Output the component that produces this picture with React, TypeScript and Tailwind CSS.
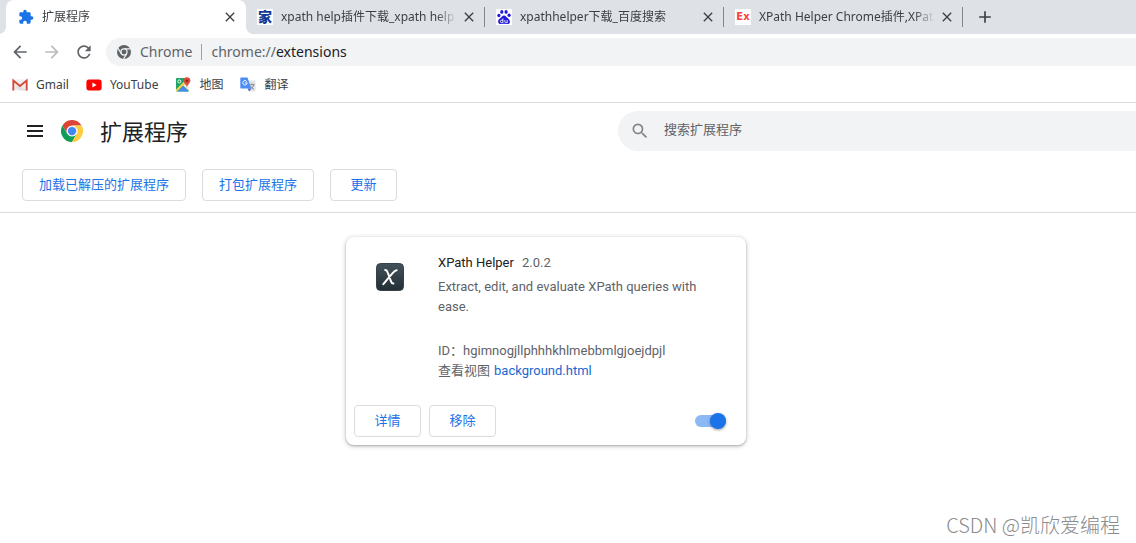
import type { ReactNode } from "react";
import {
  MdAdd,
  MdArrowBack,
  MdArrowForward,
  MdClose,
  MdExtension,
  MdRefresh,
  MdSearch,
} from "react-icons/md";

const ChromeLogo = () => (
  <svg viewBox="0 0 48 48" className="h-6 w-6 shrink-0 p-px" aria-hidden="true">
    <path fill="#db4437" d="M3.2 12A24 24 0 0 1 44.8 12H24A12 12 0 0 0 13.6 30Z" />
    <path fill="#0f9d58" d="M3.2 12 13.6 30A12 12 0 0 0 34.4 30L24 48A24 24 0 0 1 3.2 12Z" />
    <path fill="#ffcd40" d="M44.8 12A24 24 0 0 1 24 48L34.4 30A12 12 0 0 0 24 12Z" />
    <circle cx="24" cy="24" r="11" fill="#f1f1f1" />
    <circle cx="24" cy="24" r="9" fill="#4285f4" />
  </svg>
);

const ChromeMark = () => (
  <svg viewBox="0 0 48 48" className="h-4 w-4 shrink-0 p-px" aria-hidden="true">
    <circle cx="24" cy="24" r="24" fill="#5f6368" />
    <path d="M24 13H46M14.5 29.5 3.5 11M33.5 29.5 22.5 48" stroke="#f1f3f4" strokeWidth="4" />
    <circle cx="24" cy="24" r="12.5" fill="#f1f3f4" />
    <circle cx="24" cy="24" r="8.5" fill="#5f6368" />
  </svg>
);

const MenuIcon = () => (
  <svg viewBox="0 0 24 24" className="h-6 w-6" aria-hidden="true">
    <path fill="currentColor" d="M4 6h16v2H4zM4 11h16v2H4zM4 16h16v2H4z" />
  </svg>
);

const BaiduIcon = () => (
  <svg viewBox="0 0 16 16" className="h-4 w-4 shrink-0" aria-hidden="true">
    <rect width="16" height="16" rx="1" fill="#fff" />
    <g fill="#2319dc">
      <ellipse cx="2.9" cy="6.5" rx="1.6" ry="1.8" />
      <ellipse cx="5.8" cy="2.9" rx="1.6" ry="1.9" />
      <ellipse cx="10.1" cy="2.9" rx="1.6" ry="1.9" />
      <ellipse cx="13.1" cy="6.3" rx="1.6" ry="1.8" />
      <path d="M8 6.4c1.8 0 2.300 1.600 3.500 2.700 1.300 1.100 2.400 2 2.400 3.600 0 1.800-1.300 2.500-2.800 2.400-1.100 0-1.900-.3-3.100-.3s-2 .3-3.100.3c-1.500 0-2.800-.7-2.800-2.400 0-1.600 1.100-2.500 2.400-3.600C5.700 8 6.200 6.400 8 6.400Z" />
    </g>
    <path
      d="M6.900 9.500v4.200H5.500c-1.500 0-1.500-2.500 0-2.500h1.400M8.900 11v1.900c0 .6.300.8.800.8h1.500V11"
      fill="none"
      stroke="#fff"
      strokeWidth="0.9"
    />
  </svg>
);

const GmailIcon = () => (
  <svg viewBox="0 0 16 16" className="h-4 w-4" aria-hidden="true">
    <path fill="#eee" d="M1 2.5h14v11H1z" />
    <path fill="#d8d8d8" d="m8 9 7 4.5H8L4 10z" opacity=".6" />
    <path d="M1.300 13.500V3.600L8 9l6.700-5.400v9.900" fill="none" stroke="#d54b3d" strokeWidth="1.900" />
  </svg>
);

const YouTubeIcon = () => (
  <svg viewBox="0 0 16 16" className="h-4 w-4" aria-hidden="true">
    <rect x="0.4" y="2.6" width="15.200" height="10.800" rx="2.600" fill="#f00" />
    <path fill="#fff" d="m6.400 5.600 4.200 2.400-4.200 2.400z" />
  </svg>
);

const MapsIcon = () => (
  <svg viewBox="0 0 16 16" className="h-4 w-4" aria-hidden="true">
    <rect x="1" y="1" width="13" height="13.500" rx="1" fill="#1fa463" />
    <path fill="#e8e8e8" d="m8 8.500 4-4 2 3v6.500z" />
    <path fill="#4a89f3" d="m2.500 14.500 5.500-5.500 5.500 5.500z" />
    <path fill="#ffd04c" d="M1 12.500 10 3.500 11.500 5 2 14.500 1 14z" />
    <circle cx="4.300" cy="4.400" r="1.500" fill="none" stroke="#fff" strokeWidth="0.900" />
    <path fill="#dc4b3e" d="M11.900.3a3.500 3.500 0 0 1 3.500 3.500c0 2.500-3 3.200-3.500 6.600-.5-3.400-3.500-4.100-3.500-6.600A3.500 3.500 0 0 1 11.900.3Z" />
    <circle cx="11.900" cy="3.700" r="1.200" fill="#7f231c" />
  </svg>
);

const TranslateIcon = () => (
  <svg viewBox="0 0 16 16" className="h-4 w-4" aria-hidden="true">
    <path fill="#e3e3e3" d="M7 3.500h7.500c.5 0 1 .4 1 1v9c0 .6-.5 1-1 1h-5z" />
    <path
      d="M9.500 7.700h5M12 6.500v1.200M13.700 7.700c-.4 2-1.800 3.500-3.400 4.300M10.800 9.300c.7 1.200 1.700 2.200 3.100 2.900"
      fill="none"
      stroke="#7b8388"
      strokeWidth="0.900"
    />
    <path fill="#3a67c8" d="M7.500 11.500h3.700l-2 3z" />
    <path fill="#4d8cf5" d="M1.300.5h6.200l3.700 11H1.300c-.6 0-1-.4-1-1v-9c0-.6.400-1 1-1Z" />
    <path d="M6.700 4.400a2.200 2.200 0 1 0 .5 1.500H5" fill="none" stroke="#fff" strokeWidth="1" />
  </svg>
);

const XPathIcon = () => (
  <svg viewBox="0 0 28 28" className="h-7 w-7" aria-hidden="true">
    <defs>
      <linearGradient id="slate" x1="0" y1="0" x2="0" y2="1">
        <stop offset="0" stopColor="#44525b" />
        <stop offset="1" stopColor="#232e35" />
      </linearGradient>
    </defs>
    <rect x="0.5" y="0.5" width="27" height="27" rx="4" fill="url(#slate)" stroke="#35424a" />
    <path
      d="M9.200 7c1.600-.2 1.900.7 2.400 2.300l3.500 9.400c.5 1.400 1 2 2.300 1.900M20.600 7.300c-1.700.2-2.900 1.600-4.600 3.500-3 3.300-5.300 6.500-8.700 10.400"
      fill="none"
      stroke="#fff"
      strokeWidth="2"
      strokeLinecap="round"
    />
  </svg>
);

const tabs = [
  {
    title: "扩展程序",
    icon: <MdExtension className="h-4 w-4 shrink-0 text-[#1a73e8]" />,
    active: true,
  },
  {
    title: "xpath help插件下载_xpath help",
    icon: (
      <span className="h-4 w-4 shrink-0 bg-white text-center text-sm leading-4 font-black text-[#123a97]">
        家
      </span>
    ),
  },
  { title: "xpathhelper下载_百度搜索", icon: <BaiduIcon /> },
  {
    title: "XPath Helper Chrome插件,XPat",
    icon: (
      <span className="h-4 w-4 shrink-0 bg-white text-center font-['DejaVu_Sans',sans-serif] text-[10px] leading-4 font-bold text-[#f8403f]">
        Ex
      </span>
    ),
  },
];

const bookmarks = [
  { name: "Gmail", icon: <GmailIcon /> },
  { name: "YouTube", icon: <YouTubeIcon /> },
  { name: "地图", icon: <MapsIcon /> },
  { name: "翻译", icon: <TranslateIcon /> },
];

const OutlineButton = ({ children }: { children: ReactNode }) => (
  <button className="h-8 min-w-[67px] rounded border border-[#dadce0] px-4 pb-0.5 text-[13px] leading-5 text-[#1a73e8]">
    {children}
  </button>
);

const TabStrip = () => (
  <div className="flex h-[34px] bg-[#dee1e6] pl-1.5">
    {tabs.map((tab) => (
      <div
        key={tab.title}
        className={
          tab.active
            ? "relative flex w-[240px] items-center rounded-t-lg bg-white pr-2 pl-3"
            : "flex w-[239px] items-center pr-2 pl-[11px]"
        }
      >
        {tab.active && (
          <>
            <span className="absolute bottom-0 -left-2 h-2 w-2 bg-[radial-gradient(circle_at_0_0,transparent_8px,white_8px)]" />
            <span className="absolute -right-2 bottom-0 h-2 w-2 bg-[radial-gradient(circle_at_100%_0,transparent_8px,white_8px)]" />
          </>
        )}
        {tab.icon}
        <span className="ml-2 min-w-0 flex-1 overflow-hidden [mask-image:linear-gradient(to_right,black_88%,transparent)] text-xs leading-5 whitespace-nowrap text-[#3c4043]">
          {tab.title}
        </span>
        <button aria-label="关闭" className="ml-1 text-[#3c4043]">
          <MdClose className="h-4 w-4 stroke-current" />
        </button>
        {!tab.active && <span className="-mr-2 ml-[7px] h-5 w-px bg-[#80868b]" />}
      </div>
    ))}
    <button aria-label="新标签页" className="ml-3 text-[#3c4043]">
      <MdAdd className="h-5 w-5 stroke-current" />
    </button>
  </div>
);

const Toolbar = () => (
  <div className="flex h-9 items-center pt-1 pb-1 pl-2.5">
    <div className="flex w-24 items-center gap-3 text-[#5f6368]">
      <button aria-label="后退">
        <MdArrowBack className="h-5 w-5 stroke-current" />
      </button>
      <button aria-label="前进" className="text-[#babcbe]">
        <MdArrowForward className="h-5 w-5 stroke-current" />
      </button>
      <button aria-label="重新加载">
        <MdRefresh className="h-5 w-5 stroke-current" />
      </button>
    </div>
    <div className="flex h-7 flex-1 items-center rounded-l-full bg-[#f1f3f4] pl-2.5 text-sm text-[#5f6368]">
      <ChromeMark />
      <span className="ml-2">Chrome</span>
      <span className="mx-[9px] h-4 w-px bg-[#9aa0a6]" />
      <span>
        chrome://<span className="text-[#202124]">extensions</span>
      </span>
    </div>
  </div>
);

const ExtensionCard = () => (
  <article className="w-[400px] rounded-lg bg-white px-2 pt-4 pb-2 shadow-[0_1px_2px_rgba(60,64,67,0.3),0_1px_4px_1px_rgba(60,64,67,0.2)]">
    <div className="flex pr-3 pl-[22px] font-[Roboto,'Noto_Sans_CJK_SC',sans-serif] text-[13px] leading-5 text-[#5f6368]">
      <div className="w-[62px] shrink-0 pt-2.5">
        <XPathIcon />
      </div>
      <div>
        <div className="flex gap-2">
          <h2 className="text-[#202124]">XPath Helper</h2>
          <span>2.0.2</span>
        </div>
        <p className="mt-1">Extract, edit, and evaluate XPath queries with ease.</p>
        <div className="mt-6 h-5">ID：hgimnogjllphhhkhlmebbmlgjoejdpjl</div>
        <div className="flex h-5 gap-1">
          <span>查看视图</span>
          <a href="#background" className="text-[#1967d2]">
            background.html
          </a>
        </div>
      </div>
    </div>
    <div className="mt-6 flex items-center gap-2">
      <OutlineButton>详情</OutlineButton>
      <OutlineButton>移除</OutlineButton>
      <input
        type="checkbox"
        role="switch"
        aria-label="XPath Helper"
        defaultChecked
        className="relative mr-3 ml-auto h-3 w-[31px] appearance-none rounded-full bg-[#bdc1c6] before:absolute before:-top-0.5 before:left-0 before:h-4 before:w-4 before:rounded-full before:bg-white before:shadow-[0_1px_3px_rgba(0,0,0,0.4)] checked:bg-[#8cb9f4] checked:before:right-0 checked:before:left-auto checked:before:bg-[#1a73e8]"
      />
    </div>
  </article>
);

const App = () => {
  return (
    <div className="relative min-h-screen overflow-hidden bg-white font-['Noto_Sans','Noto_Sans_CJK_SC',sans-serif]">
      <TabStrip />
      <Toolbar />
      <nav className="flex h-[33px] gap-[17px] border-b border-[#dadce0] pb-0.5 pl-3 text-xs text-[#3c4043]">
        {bookmarks.map((bookmark) => (
          <a key={bookmark.name} href="#bookmark" className="flex items-center gap-2">
            {bookmark.icon}
            {bookmark.name}
          </a>
        ))}
      </nav>

      <header className="flex h-14 items-center">
        <div className="flex w-[618px] shrink-0 items-center pl-[23px]">
          <button aria-label="主菜单" className="text-[#202124]">
            <MenuIcon />
          </button>
          <span className="ml-[13px]">
            <ChromeLogo />
          </span>
          <h1 className="ml-4 text-[22px] leading-8 text-[#202124]">扩展程序</h1>
        </div>
        <label className="flex h-10 flex-1 items-center rounded-l-full bg-[#f1f3f4] pl-3">
          <MdSearch className="h-5 w-5 text-[#80868b]" />
          <input
            type="search"
            aria-label="搜索扩展程序"
            placeholder="搜索扩展程序"
            className="ml-3.5 flex-1 bg-transparent pb-0.5 text-[13px] outline-none placeholder:text-[#5f6368]"
          />
        </label>
      </header>

      <div className="flex gap-4 border-b border-[#dadce0] pt-2.5 pb-[11px] pl-[22px]">
        <OutlineButton>加载已解压的扩展程序</OutlineButton>
        <OutlineButton>打包扩展程序</OutlineButton>
        <OutlineButton>更新</OutlineButton>
      </div>

      <main className="pt-6 pl-[346px]">
        <ExtensionCard />
      </main>

      <div className="absolute right-4 bottom-1 font-['Noto_Sans_CJK_SC',sans-serif] text-xl font-light text-[#8c8c8c]">
        CSDN @凯欣爱编程
      </div>
    </div>
  );
};

export default App;
